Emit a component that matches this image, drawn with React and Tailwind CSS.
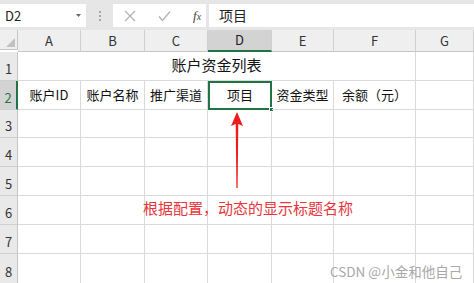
import React from 'react';

const font = { fontFamily: '"Microsoft YaHei", "Noto Sans CJK SC", "Liberation Sans", sans-serif' };

const cols = ['A', 'B', 'C', 'D', 'E', 'F', 'G'];
const headers = ['账户ID', '账户名称', '推广渠道', '项目', '资金类型', '余额（元）', ''];
const rowHeights = ['h-[29px]', 'h-[29px]', 'h-[28px]', 'h-[29px]', 'h-[29px]', 'h-[29px]', 'h-[29px]', 'h-[30px]'];

const ColHead = ({ label, active }) => (
        <div className={`flex items-center justify-center text-[13px] border-r border-[#cfcfcf] ${active ? 'bg-[#d3d3d3] text-[#1e1e1e] border-b-2 border-b-[#217346]' : 'bg-[#efefef] text-[#333] border-b border-b-[#c6c6c6]'}`}>
                {label}
        </div>
);

const RowHead = ({ n, active, h }) => (
        <div className={`${h} flex items-end justify-center pb-[1px] text-[13px] border-b border-[#cfcfcf] ${active ? 'bg-[#d3d3d3] text-[#217346] border-r-2 border-r-[#217346]' : 'bg-[#e9e9e9] text-[#333] border-r border-r-[#c6c6c6]'}`}>
                {n}
        </div>
);

export default function App() {
        return (
                <div className="relative w-[474px] h-[283px] overflow-hidden bg-white" style={font}>
                        {/* Formula bar */}
                        <div className="h-[30px] bg-[#e6e6e6] flex items-start pt-[4px]">
                                <div className="w-[86px] h-[23px] bg-white flex items-center justify-between pl-[5px] pr-[5px] text-[13px] text-[#222]">
                                        <span>D2</span>
                                        <svg width="5" height="3" viewBox="0 0 5 3">
                                                <path d="M0 0 L5 0 L2.5 3 Z" fill="#666" />
                                        </svg>
                                </div>
                                <div className="w-[27px] h-[23px] flex flex-col items-center justify-center gap-[2px]">
                                        <span className="w-[2px] h-[2px] bg-[#aaa]" />
                                        <span className="w-[2px] h-[2px] bg-[#aaa]" />
                                        <span className="w-[2px] h-[2px] bg-[#aaa]" />
                                </div>
                                <div className="w-[93px] h-[23px] bg-white flex items-center pl-[11px] gap-[22px]">
                                        <svg width="12" height="12" viewBox="0 0 12 12">
                                                <path d="M1 1 L11 11 M11 1 L1 11" stroke="#b0b0b0" strokeWidth="1.2" fill="none" />
                                        </svg>
                                        <svg width="13" height="12" viewBox="0 0 13 12">
                                                <path d="M1 6.5 L4.5 10.5 L12 1.5" stroke="#b0b0b0" strokeWidth="1.2" fill="none" />
                                        </svg>
                                        <span className="text-[13px] italic text-[#444] font-['Liberation_Serif',serif]">f<span className="text-[10px]">x</span></span>
                                </div>
                                <div className="w-[3px]" />
                                <div className="flex-1 h-[23px] bg-white flex items-center pl-[10px] text-[14px] text-[#222]">项目</div>
                        </div>

                        {/* Sheet grid */}
                        <div className="grid grid-cols-[18px_63px_64px_63px_64px_62px_82px_58px]">
                                <div className="h-[20px] bg-[#efefef] border-r border-b border-[#c6c6c6] relative">
                                        <svg className="absolute right-[2px] bottom-[2px]" width="9" height="9" viewBox="0 0 9 9">
                                                <path d="M9 0 L9 9 L0 9 Z" fill="#c2c2c2" />
                                        </svg>
                                </div>
                                {cols.map((c) => (
                                        <ColHead key={c} label={c} active={c === 'D'} />
                                ))}

                                {/* Row 1 */}
                                <RowHead n={1} h={rowHeights[0]} />
                                <div className="col-span-6 flex items-center justify-center text-[15px] text-[#111] border-b border-r border-[#dadada]">
                                        账户资金列表
                                </div>
                                <div className="border-b border-r border-[#dadada]" />

                                {/* Row 2 */}
                                <RowHead n={2} h={rowHeights[1]} active />
                                {headers.map((t, i) => (
                                        <div
                                                key={i}
                                                className={`relative flex items-center justify-center text-[13px] text-[#111] ${i === 3 ? 'border-2 border-[#217346]' : 'border-b border-r border-[#dadada]'}`}
                                        >
                                                {t}
                                                {i === 3 && (
                                                        <span className="absolute right-[-4px] bottom-[-4px] w-[5px] h-[5px] bg-[#217346] border border-white" />
                                                )}
                                        </div>
                                ))}

                                {/* Rows 3-8 */}
                                {[3, 4, 5, 6, 7, 8].map((n, ri) => (
                                        <React.Fragment key={n}>
                                                <RowHead n={n} h={rowHeights[ri + 2]} />
                                                {cols.map((c) => (
                                                        <div key={c} className="border-b border-r border-[#dadada]" />
                                                ))}
                                        </React.Fragment>
                                ))}
                        </div>

                        {/* Annotation arrow */}
                        <svg className="absolute left-[229px] top-[111px]" width="16" height="78" viewBox="0 0 16 78">
                                <path d="M8 1 L14 15 L9.3 13 L8.6 77 L7.4 77 L6.7 13 L2 15 Z" fill="#ee1c1c" />
                        </svg>

                        {/* Annotation text */}
                        <div className="absolute left-[143px] top-[197px] text-[15px] text-[#e8353c] leading-[22px]">
                                根据配置，动态的显示标题名称
                        </div>

                        {/* Watermark */}
                        <div className="absolute left-[330px] top-[262px] text-[13.5px] text-[#a8a8a8] leading-[18px]">
                                CSDN @小金和他自己
                        </div>
                </div>
        );
}
